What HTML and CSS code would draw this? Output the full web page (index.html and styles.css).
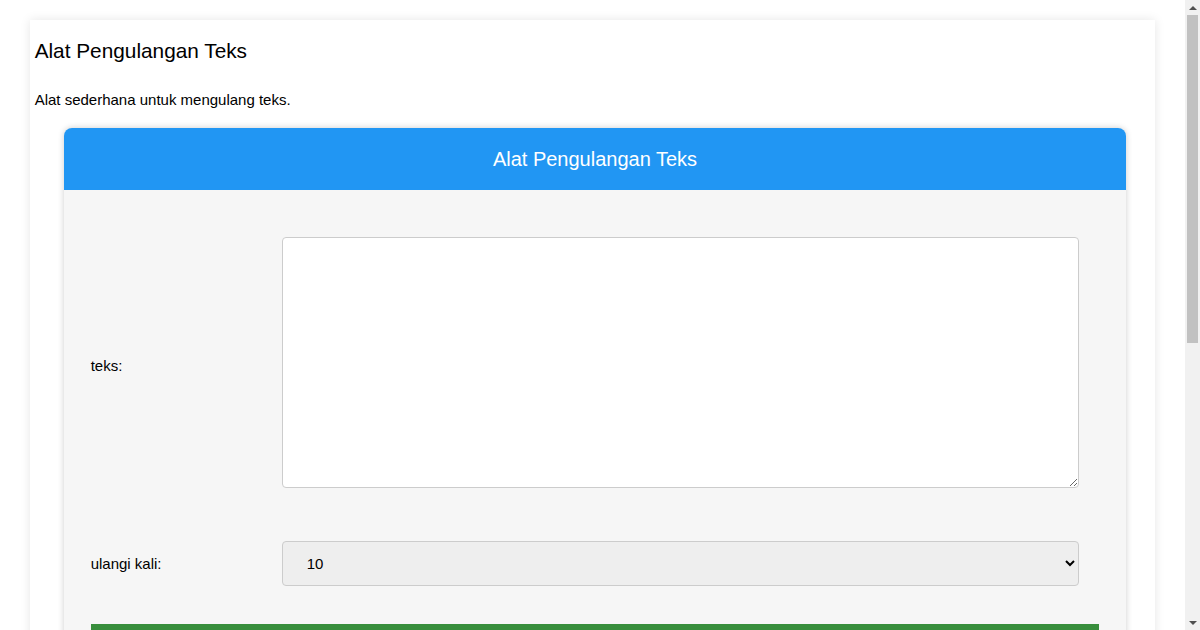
FILE: index.html
```html
<!DOCTYPE html>
<html lang="id">
<head>
<meta charset="utf-8">
<title>Alat Pengulangan Teks</title>
<link rel="stylesheet" href="styles.css">
</head>
<body>
<div class="page">
  <h1 class="page-title">Alat Pengulangan Teks</h1>
  <p class="page-desc">Alat sederhana untuk mengulang teks.</p>
  <div class="tool">
    <div class="tool-header">Alat Pengulangan Teks</div>
    <div class="tool-body">
      <div class="row row-text">
        <label class="label label-text" for="teks">teks:</label>
        <div class="field"><textarea id="teks" class="input-area"></textarea></div>
      </div>
      <div class="row row-select">
        <label class="label" for="kali">ulangi kali:</label>
        <div class="field">
          <select id="kali" class="input-select">
            <option>10</option>
          </select>
        </div>
      </div>
      <button class="btn-go" type="button">Ulangi</button>
      <div class="row row-result">
        <label class="label" for="hasil">hasil:</label>
        <div class="field"><textarea id="hasil" class="input-area" readonly></textarea></div>
      </div>
    </div>
  </div>
</div>
<div class="scrollbar" aria-hidden="true">
  <div class="sb-arrow sb-up"></div>
  <div class="sb-track"><div class="sb-thumb"></div></div>
  <div class="sb-arrow sb-down"></div>
</div>
</body>
</html>
```

FILE: styles.css
```css
html, body {
  margin: 0;
  padding: 0;
  background: #ffffff;
}
body {
  font-family: "Liberation Sans", Arial, sans-serif;
  font-size: 15px;
  color: #000;
  margin-right: 15px;
}
.page {
  width: 95%;
  margin: 20px auto;
  padding: 5px 5px 40px;
  box-sizing: border-box;
  background: #fff;
  box-shadow: 0 0 10px rgba(0, 0, 0, 0.1);
}
.page-title {
  font-size: 20.8px;
  font-weight: normal;
  margin: 14px 0 0;
  line-height: 24px;
}
.page-desc {
  margin: 28px 0 20px;
  line-height: 17px;
}
.tool {
  margin: 0 24px 0 29px;
  border-radius: 8px;
  overflow: hidden;
  background: #f6f6f6;
  box-shadow: 0 0 6px rgba(0, 0, 0, 0.2);
}
.tool-header {
  background: #2196f3;
  color: #fff;
  height: 62px;
  display: flex;
  align-items: center;
  justify-content: center;
  font-size: 20px;
}
.tool-body {
  padding: 47px 27px 40px;
  display: flex;
  flex-direction: column;
}
.row {
  display: grid;
  grid-template-columns: 191px 1fr;
  align-items: center;
}
.label-text {
  padding-top: 6px;
}
.field {
  padding-right: 20px;
}
.input-area {
  display: block;
  width: 100%;
  height: 251px;
  box-sizing: border-box;
  border: 1px solid #ccc;
  border-radius: 4px;
  background: #fff;
  font-family: inherit;
  font-size: 15px;
  padding: 8px;
}
.row-select {
  margin-top: 53px;
}
.input-select {
  display: block;
  width: 100%;
  height: 45px;
  box-sizing: border-box;
  border: 1px solid #ccc;
  border-radius: 4px;
  background: #eee;
  font-family: inherit;
  font-size: 15px;
  color: #000;
  padding: 0 20px;
}
.btn-go {
  margin-top: 38px;
  height: 45px;
  border: none;
  background: #388e3c;
  color: #fff;
  font-family: inherit;
  font-size: 16px;
}
.row-result {
  margin-top: 40px;
}
.row-result .input-area {
  height: 200px;
}

/* simulated browser scrollbar */
.scrollbar {
  position: fixed;
  top: 0;
  right: 0;
  width: 15px;
  height: 100%;
  background: #f1f1f1;
  display: flex;
  flex-direction: column;
}
.sb-arrow {
  height: 15px;
  flex: none;
  display: flex;
  align-items: center;
  justify-content: center;
}
.sb-arrow::before {
  content: "";
  width: 0;
  height: 0;
  border-left: 4px solid transparent;
  border-right: 4px solid transparent;
}
.sb-up::before {
  border-bottom: 4px solid #505050;
}
.sb-down::before {
  border-top: 4px solid #505050;
}
.sb-track {
  flex: 1;
  padding: 0 2px;
}
.sb-thumb {
  height: 328px;
  background: #c1c1c1;
}
```
